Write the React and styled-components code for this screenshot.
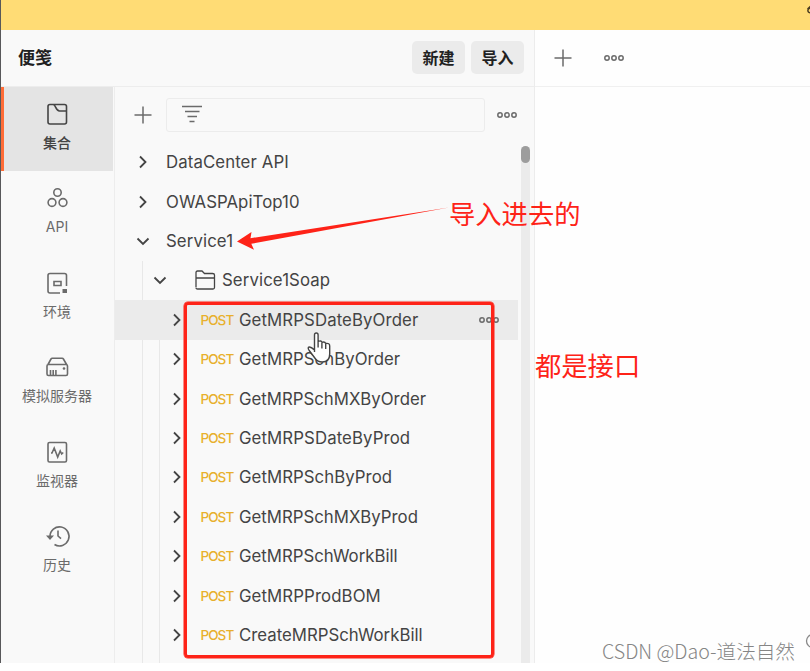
import React from "react";
import styled, { createGlobalStyle, css } from "styled-components";

const GlobalStyle = createGlobalStyle`
  * { box-sizing: border-box; }
  body { margin: 0; background: #fff; font-family: Inter, "Noto Sans CJK SC", sans-serif; overflow: hidden; }
  svg { display: block; flex: none; overflow: visible; }
`;

const Page = styled.div`
  position: relative;
  width: 810px;
  height: 671px;
  overflow: hidden;
  background: #fff;
`;
const Window = styled.div`
  display: flex;
  flex-direction: column;
  height: 663px;
  overflow: hidden;
  border-left: 1px solid #58585a;
`;
const Banner = styled.div`
  display: flex;
  justify-content: flex-end;
  flex: none;
  height: 30px;
  padding-top: 6px;
  background: #ffdc75;
`;
const Body = styled.div`
  display: grid;
  grid-template-columns: 534px 1fr;
  flex: 1;
  min-height: 0;
`;
const Explorer = styled.section`
  display: flex;
  flex-direction: column;
  min-height: 0;
  background: #f9f9f9;
  border-right: 1px solid #ececec;
`;
const ExplorerHeader = styled.header`
  display: flex;
  align-items: center;
  gap: 6px;
  flex: none;
  height: 57px;
  padding: 1px 10px 2px 17px;
  border-bottom: 1px solid #ededed;
`;
const Title = styled.h1`
  flex: 1;
  margin: 0;
  font-size: 17px;
  line-height: 24px;
  font-weight: 700;
  color: #212121;
`;
const Button = styled.button`
  width: 53px;
  height: 33px;
  padding: 0;
  border: 0;
  border-radius: 5px;
  background: #ebebeb;
  color: #212121;
  font: 700 16px/24px Inter, "Noto Sans CJK SC", sans-serif;
`;
const Columns = styled.div`
  display: flex;
  flex: 1;
  min-height: 0;
`;
const Rail = styled.nav`
  flex: none;
  width: 114px;
  padding-right: 1px;
  border-right: 1px solid #ededed;
`;
const RailItem = styled.div`
  display: flex;
  flex-direction: column;
  align-items: center;
  gap: 5px;
  height: 84.4px;
  padding-top: 15px;
  font-size: 14px;
  line-height: 23px;
  color: #6b6b6b;
  ${(p) => p.$active && css`
    color: #444;
    font-weight: 500;
    background: #e4e4e4;
    box-shadow: inset 3px 0 #ff6c37;
  `}
`;
const Browser = styled.div`
  display: flex;
  flex-direction: column;
  flex: 1;
  min-width: 0;
`;
const Toolbar = styled.div`
  display: flex;
  align-items: center;
  flex: none;
  height: 55.6px;
  padding-left: 19px;
  color: #6b6b6b;
`;
const Filter = styled.div`
  display: flex;
  align-items: center;
  width: 318.5px;
  height: 34px;
  margin: 0 11.5px 0 14px;
  padding-left: 15px;
  border: 1px solid #ececec;
  border-radius: 3px;
`;
const Scroller = styled.div`
  display: flex;
  flex: 1;
  min-height: 0;
`;
const Tree = styled.div`
  width: 402.5px;
  overflow: hidden;
`;
const Row = styled.div`
  display: flex;
  align-items: center;
  height: 39.4px;
  color: #444;
  background: ${(p) => (p.$selected ? "#ebebeb" : "transparent")};
`;
const Guide = styled.i`
  flex: none;
  align-self: stretch;
  width: 17px;
  margin-left: 27px;
  margin-right: -27px;
  border-left: 1px solid ${(p) => (p.$hidden ? "transparent" : "#e8e8e8")};
`;
const Toggle = styled.span`
  display: flex;
  justify-content: center;
  flex: none;
  width: 20px;
  margin-left: 18px;
`;
const Label = styled.span`
  margin-left: ${(p) => p.$gap}px;
  font-size: 16.8px;
  line-height: 24px;
  white-space: nowrap;
  letter-spacing: ${(p) => p.$track || 0}px;
`;
const Method = styled.span`
  width: 34px;
  margin-left: 13.5px;
  font-size: 13.5px;
  line-height: 24px;
  font-weight: 500;
  letter-spacing: -0.95px;
  color: #e8b02c;
`;
const More = styled.span`
  margin-left: auto;
  padding-right: 18px;
  color: #6b6b6b;
`;
const Track = styled.div`
  width: 9px;
  margin: 3.6px 0 0 3.5px;
  background: #ebebeb;
  border-radius: 5px 5px 0 0;
`;
const Thumb = styled.div`
  height: 17px;
  border-radius: 5px;
  background: #9d9d9d;
`;
const Workspace = styled.main`
  background: #fefefe;
`;
const Tabs = styled.div`
  display: flex;
  align-items: center;
  gap: 31px;
  height: 57px;
  padding: 1px 0 2px 19px;
  border-bottom: 1px solid #f0f0f0;
  color: #6b6b6b;
`;
const MarkBox = styled.div`
  position: absolute;
  left: 184px;
  top: 301.5px;
  width: 309.5px;
  height: 356.5px;
  border: 3px solid #fe2318;
  border-radius: 4px;
  box-shadow: 0 0 0 0.5px #fe2318;
`;
const Overlay = styled.div`
  position: absolute;
  left: ${(p) => p.$x}px;
  top: ${(p) => p.$y}px;
`;
const Note = styled(Overlay)`
  font-size: 26.3px;
  line-height: 34px;
  color: #fe2318;
  white-space: nowrap;
`;
const Watermark = styled(Overlay)`
  font: 300 19.6px/26px "Noto Sans CJK SC", sans-serif;
  color: #858585;
  white-space: nowrap;
`;

const Svg = ({ w = 24, h = w, sw = 1.6, children }) => (
  <svg width={w} height={h} viewBox={`0 0 ${w} ${h}`} fill="none" stroke="currentColor" strokeWidth={sw}>
    {children}
  </svg>
);
const Plus = () => <Svg w={18} sw={1.5}><path d="M9 .5v17M.5 9h17" /></Svg>;
const Dots = () => (
  <Svg w={22} h={8} sw={1.5}>
    <circle cx="4" cy="4" r="2.2" /><circle cx="11" cy="4" r="2.2" /><circle cx="18" cy="4" r="2.2" />
  </Svg>
);
const Chevron = ({ open }) => (
  <Svg w={14} sw={1.8}><path d={open ? "M1.5 4.5 7 10l5.5-5.5" : "M4 1.5 9.5 7 4 12.5"} /></Svg>
);
const FolderIcon = () => (
  <Svg w={22} sw={1.3}><path d="M2 18V3.5q0-1.500 1.500-1.500H8l2.500 2.500h8Q20.500 4.500 20.500 6v12.500q0 1.500-1.500 1.500H3.500Q2 20 2 18.500M2 9h18.500" /></Svg>
);
const FilterIcon = () => (
  <Svg w={20} sw={1.5}><path d="M0 1.5h20M3 6.5h14.500M5.500 11.500h9.500M7.500 16.500h5" /></Svg>
);

const railIcons = {
  collection: <path d="M4 2.500h14.500q2 0 2 2V20q0 2-2 2H4q-2 0-2-2V4.500q0-2 2-2ZM7 2.500c3 0 2.500 6.500 6.500 6.500h7" />,
  api: <><circle cx="11.5" cy="6.5" r="3.7" /><circle cx="6" cy="16.5" r="3.9" /><circle cx="17" cy="16.5" r="3.9" /></>,
  env: <>
    <path d="M14 22H4q-2 0-2-2V4.500q0-2 2-2h14.500q2 0 2 2V15M8 10.500h7v4H8Z" />
    <path d="M16.500 18h4.500v4h-4.500Z" fill="currentColor" stroke="none" />
  </>,
  server: <>
    <path d="M1 11v8q0 1.500 1.500 1.500H20q1.500 0 1.500-1.500v-8q0-1.500-1.500-1.500H2.500Q1 9.500 1 11ZM2 9.500l3-5.500q.4-.7 1.200-.7h10q.8 0 1.200.7l3.200 5.500M4.500 15v5M7.200 15v5M9.900 15v5" />
    <circle cx="18" cy="13.5" r="1.3" fill="currentColor" stroke="none" />
  </>,
  monitor: <path d="M3.500 2.500H19q1.500 0 1.500 1.500v16.500q0 1.500-1.500 1.500H3.500Q2 22 2 20.500V4q0-1.500 1.500-1.500ZM5 13h1l2.200-5 3.500 9 2.500-6 1.500 3 1.500-1.500" />,
  history: <>
    <path d="M4 12.500a9.500 9.500 0 1 1 4.500 8M12 6.500v5.500l3 2.700" />
    <path d="M0 11.500h8L4 16Z" fill="currentColor" stroke="none" />
  </>,
};
const nav = [
  ["collection", "集合"], ["api", "API"], ["env", "环境"],
  ["server", "模拟服务器"], ["monitor", "监视器"], ["history", "历史"],
];
const collections = [["DataCenter API", 0.1], ["OWASPApiTop10", 0.05], ["Service1", 0.1]];
const requests = [
  ["GetMRPSDateByOrder", 0.1], ["GetMRPSchByOrder", 0.05], ["GetMRPSchMXByOrder", 0],
  ["GetMRPSDateByProd", 0.1], ["GetMRPSchByProd", 0.05], ["GetMRPSchMXByProd", 0],
  ["GetMRPSchWorkBill", 0], ["GetMRPProdBOM", 0.1], ["CreateMRPSchWorkBill", 0],
];

export default function App() {
  return (
    <Page>
      <GlobalStyle />
      <Window>
        <Banner>
          <svg width="4" height="8" viewBox="0 0 4 8" fill="none" stroke="#4a3c20" strokeWidth="1.5"><path d="M5 0 1.500 3M5 2.500a2.200 2.200 0 1 0 0 4" /></svg>
        </Banner>
        <Body>
          <Explorer>
            <ExplorerHeader>
              <Title>便笺</Title>
              <Button>新建</Button>
              <Button>导入</Button>
            </ExplorerHeader>
            <Columns>
              <Rail>
                {nav.map(([icon, label], i) => (
                  <RailItem key={icon} $active={i === 0}>
                    <Svg w={23} h={24} sw={1.6}>{railIcons[icon]}</Svg>
                    {label}
                  </RailItem>
                ))}
              </Rail>
              <Browser>
                <Toolbar>
                  <Plus />
                  <Filter><FilterIcon /></Filter>
                  <Dots />
                </Toolbar>
                <Scroller>
                  <Tree>
                    {collections.map(([name, track], i) => (
                      <Row key={name}>
                        <Toggle><Chevron open={i === 2} /></Toggle>
                        <Label $gap={13} $track={track}>{name}</Label>
                      </Row>
                    ))}
                    <Row>
                      <Guide />
                      <Toggle><Chevron open /></Toggle>
                      <Label $gap={24}><FolderIcon /></Label>
                      <Label $gap={6} $track={0.1}>Service1Soap</Label>
                    </Row>
                    {requests.map(([name, track], i) => (
                      <Row key={name} $selected={i === 0}>
                        <Guide $hidden={i === 0} />
                        <Guide $hidden={i === 0} />
                        <Toggle><Chevron /></Toggle>
                        <Method>POST</Method>
                        <Label $gap={4.5} $track={track}>{name}</Label>
                        {i === 0 && <More><Dots /></More>}
                      </Row>
                    ))}
                    <Row><Guide /><Guide /></Row>
                  </Tree>
                  <Track><Thumb /></Track>
                </Scroller>
              </Browser>
            </Columns>
          </Explorer>
          <Workspace>
            <Tabs><Plus /><Dots /></Tabs>
          </Workspace>
        </Body>
      </Window>
      <MarkBox />
      <Overlay $x={237} $y={203}>
        <svg width="214" height="48" viewBox="0 0 214 48" fill="#fe2318">
          <path d="M0 38.500 14.500 29l-1 6.200L212 4.500 14.300 40.800l2.700 6Z" />
        </svg>
      </Overlay>
      <Overlay $x={306} $y={332}>
        <svg width="26" height="32" viewBox="0 0 26 32" fill="#fff" stroke="#444" strokeWidth="1.4" strokeLinejoin="round">
          <path d="M8.500 20V3q0-2 1.800-2t1.800 2v6.500q3-1.500 3.800.8 3-1 3.800 1.200 4-.7 4 2.500v8q0 8-7.500 8-4.500 0-7-3.500l-6-8q-2-3.500 0-3.500t5.300 3M12.100 9.500v6M15.900 11v5.500M19.700 12v5" />
        </svg>
      </Overlay>
      <Note $x={449} $y={198}>导入进去的</Note>
      <Note $x={535} $y={350}>都是接口</Note>
      <Watermark $x={602} $y={638}>CSDN @Dao-道法自然</Watermark>
      <Overlay $x={805} $y={633}>
        <svg width="5" height="16" viewBox="0 0 5 16" fill="none" stroke="#888" strokeWidth="1.3"><circle cx="8" cy="8" r="6.5" /></svg>
      </Overlay>
    </Page>
  );
}
